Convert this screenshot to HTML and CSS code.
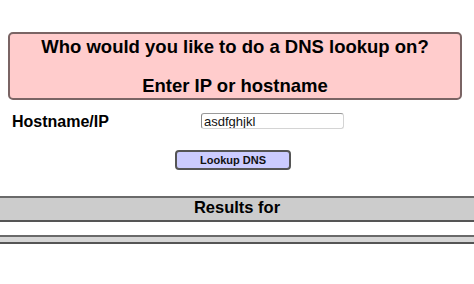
FILE: index.html
```html
<!DOCTYPE html>
<html lang="en">
<head>
    <meta charset="UTF-8">
    <title>DNS Lookup</title>
    <link rel="stylesheet" href="styles.css">
</head>
<body>
    <div class="prompt">
        <h3>Who would you like to do a DNS lookup on?</h3>
        <h3 class="sub">Enter IP or hostname</h3>
    </div>

    <form class="lookup-form" onsubmit="return false;">
        <div class="form-row">
            <label for="host" class="label">Hostname/IP</label>
            <input type="text" id="host" class="host-input" value="asdfghjkl">
        </div>
        <div class="button-row">
            <button type="submit" class="lookup-button">Lookup DNS</button>
        </div>
    </form>

    <div class="results-head">Results for</div>
    <div class="results-body"></div>
</body>
</html>
```

FILE: styles.css
```css
body {
    margin: 0;
    font-family: "Liberation Sans", Arial, sans-serif;
    color: #000000;
    background: #ffffff;
}

.prompt {
    margin: 32px 12px 0 8px;
    padding: 2px 0;
    background-color: #ffcccc;
    border: 2px solid #7a6464;
    border-radius: 5px;
    text-align: center;
}

.prompt h3 {
    margin: 0;
    font-size: 18.5px;
    line-height: 21px;
    font-weight: bold;
}

.prompt .sub {
    margin-top: 18px;
}

.lookup-form {
    margin: 13px 0 0;
}

.form-row {
    display: grid;
    grid-template-columns: 189px 143px;
    align-items: start;
    padding-left: 12px;
}

.label {
    font-size: 16px;
    line-height: 18px;
    font-weight: bold;
}

.host-input {
    box-sizing: border-box;
    width: 143px;
    height: 16px;
    margin: 0;
    padding: 0 2px;
    font-family: "Liberation Sans", Arial, sans-serif;
    font-size: 13px;
    color: #111111;
    background: #ffffff;
    border: 1px solid #d4d4d4;
    border-top-color: #9a9a9a;
    border-left-color: #8a8a8a;
    border-radius: 3px;
    outline: none;
}

.button-row {
    display: flex;
    justify-content: center;
    padding-right: 8px;
    margin-top: 19px;
}

.lookup-button {
    box-sizing: border-box;
    width: 116px;
    height: 20px;
    padding: 0;
    font-family: "Liberation Sans", Arial, sans-serif;
    font-size: 11px;
    font-weight: bold;
    color: #111111;
    background-color: #ccccff;
    border: 2px solid #555555;
    border-radius: 4px;
    cursor: pointer;
}

.results-head {
    margin-top: 26px;
    padding: 0 0 3px;
    background-color: #cccccc;
    border-top: 2px solid #6a6a6a;
    border-bottom: 2px solid #555555;
    text-align: center;
    font-size: 16.5px;
    line-height: 19px;
    font-weight: bold;
}

.results-body {
    margin-top: 13px;
    height: 5px;
    background-color: #d6d6d6;
    border-top: 2px solid #6a6a6a;
    border-bottom: 2px solid #555555;
}
```
